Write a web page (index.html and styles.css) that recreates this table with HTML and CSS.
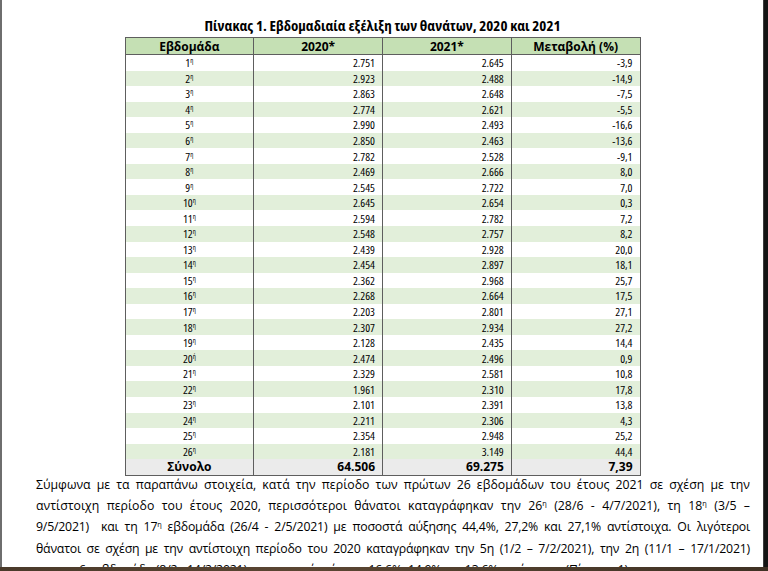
FILE: index.html
```html
<!DOCTYPE html>
<html lang="el">
<head>
<meta charset="utf-8">
<title>Πίνακας 1</title>
<link rel="stylesheet" href="styles.css">
</head>
<body>
<div class="screen">
  <div class="main">
    <div class="page">
      <h1 class="title">Πίνακας 1. Εβδομαδιαία εξέλιξη των θανάτων, 2020 και 2021</h1>
      <table class="deaths">
        <thead>
          <tr><th>Εβδομάδα</th><th>2020*</th><th>2021*</th><th>Μεταβολή (%)</th></tr>
        </thead>
        <tbody>
          <tr><td>1<sup>η</sup></td><td>2.751</td><td>2.645</td><td>-3,9</td></tr>
          <tr class="alt"><td>2<sup>η</sup></td><td>2.923</td><td>2.488</td><td>-14,9</td></tr>
          <tr><td>3<sup>η</sup></td><td>2.863</td><td>2.648</td><td>-7,5</td></tr>
          <tr class="alt"><td>4<sup>η</sup></td><td>2.774</td><td>2.621</td><td>-5,5</td></tr>
          <tr><td>5<sup>η</sup></td><td>2.990</td><td>2.493</td><td>-16,6</td></tr>
          <tr class="alt"><td>6<sup>η</sup></td><td>2.850</td><td>2.463</td><td>-13,6</td></tr>
          <tr><td>7<sup>η</sup></td><td>2.782</td><td>2.528</td><td>-9,1</td></tr>
          <tr class="alt"><td>8<sup>η</sup></td><td>2.469</td><td>2.666</td><td>8,0</td></tr>
          <tr><td>9<sup>η</sup></td><td>2.545</td><td>2.722</td><td>7,0</td></tr>
          <tr class="alt"><td>10<sup>η</sup></td><td>2.645</td><td>2.654</td><td>0,3</td></tr>
          <tr><td>11<sup>η</sup></td><td>2.594</td><td>2.782</td><td>7,2</td></tr>
          <tr class="alt"><td>12<sup>η</sup></td><td>2.548</td><td>2.757</td><td>8,2</td></tr>
          <tr><td>13<sup>η</sup></td><td>2.439</td><td>2.928</td><td>20,0</td></tr>
          <tr class="alt"><td>14<sup>η</sup></td><td>2.454</td><td>2.897</td><td>18,1</td></tr>
          <tr><td>15<sup>η</sup></td><td>2.362</td><td>2.968</td><td>25,7</td></tr>
          <tr class="alt"><td>16<sup>η</sup></td><td>2.268</td><td>2.664</td><td>17,5</td></tr>
          <tr><td>17<sup>η</sup></td><td>2.203</td><td>2.801</td><td>27,1</td></tr>
          <tr class="alt"><td>18<sup>η</sup></td><td>2.307</td><td>2.934</td><td>27,2</td></tr>
          <tr><td>19<sup>η</sup></td><td>2.128</td><td>2.435</td><td>14,4</td></tr>
          <tr class="alt"><td>20<sup>ή</sup></td><td>2.474</td><td>2.496</td><td>0,9</td></tr>
          <tr><td>21<sup>η</sup></td><td>2.329</td><td>2.581</td><td>10,8</td></tr>
          <tr class="alt"><td>22<sup>η</sup></td><td>1.961</td><td>2.310</td><td>17,8</td></tr>
          <tr><td>23<sup>η</sup></td><td>2.101</td><td>2.391</td><td>13,8</td></tr>
          <tr class="alt"><td>24<sup>η</sup></td><td>2.211</td><td>2.306</td><td>4,3</td></tr>
          <tr><td>25<sup>η</sup></td><td>2.354</td><td>2.948</td><td>25,2</td></tr>
          <tr class="alt"><td>26<sup>η</sup></td><td>2.181</td><td>3.149</td><td>44,4</td></tr>
        </tbody>
        <tfoot>
          <tr class="total"><td>Σύνολο</td><td>64.506</td><td>69.275</td><td>7,39</td></tr>
        </tfoot>
      </table>
      <div class="text">
        <p class="line">Σύμφωνα με τα παραπάνω στοιχεία, κατά την περίοδο των πρώτων 26 εβδομάδων του έτους 2021 σε σχέση με την</p>
        <p class="line">αντίστοιχη περίοδο του έτους 2020, περισσότεροι θάνατοι καταγράφηκαν την 26<sup>η</sup> (28/6 - 4/7/2021), τη 18<sup>η</sup> (3/5 –</p>
        <p class="line tight">9/5/2021)&nbsp; και τη 17<sup>η</sup> εβδομάδα (26/4 - 2/5/2021) με ποσοστά αύξησης 44,4%, 27,2% και 27,1% αντίστοιχα. Οι λιγότεροι</p>
        <p class="line tight">θάνατοι σε σχέση με την αντίστοιχη περίοδο του 2020 καταγράφηκαν την 5η (1/2 – 7/2/2021), την 2η (11/1 – 17/1/2021)</p>
        <p class="line tight last">και την 6η εβδομάδα (8/2 - 14/2/2021) με ποσοστά μείωσης 16,6%, 14,9% και 13,6% αντίστοιχα (Πίνακας 1).</p>
      </div>
    </div>
    <div class="edge"></div>
  </div>
  <div class="floor"></div>
</div>
</body>
</html>
```

FILE: styles.css
```css
html, body {
  margin: 0;
  padding: 0;
  background: #1a1a1a;
}

.screen {
  width: 768px;
  height: 571px;
  display: flex;
  flex-direction: column;
  overflow: hidden;
}

.main {
  display: flex;
  height: 567px;
}

.page {
  flex: 1;
  background: #ffffff;
  border-left: 2px solid #6e6e6e;
  overflow: hidden;
  padding-top: 15px;
  font-family: "Open Sans", "Noto Sans", sans-serif;
  font-stretch: 87.5%;
  color: #000;
}

.edge {
  width: 5px;
  background: linear-gradient(90deg, #3c3c3c 0, #3c3c3c 1px, #141414 1px);
}

.floor {
  height: 4px;
  background: linear-gradient(90deg, #4a3a2a, #5b4633 40%, #4e3d2c 70%, #3f3124);
}

.title {
  margin: 0;
  font-size: 15px;
  font-weight: 700;
  line-height: 20px;
  text-align: center;
}

.deaths {
  margin: 2px auto 0;
  width: 516px;
  border-collapse: collapse;
  table-layout: fixed;
  font-size: 11.5px;
  border: 1px solid #5e5e5e;
}

.deaths th {
  background: #c5e0b4;
  height: 16px;
  padding: 0;
  font-size: 12px;
  font-stretch: 100%;
  font-weight: 700;
  text-align: center;
  border: 1px solid #5e5e5e;
  line-height: 15px;
}

.deaths td {
  height: 15.55px;
  padding: 0 7px 0 0;
  line-height: 15px;
  text-align: right;
  border-left: 1px solid #5e5e5e;
  border-right: 1px solid #5e5e5e;
}

.deaths td:first-child {
  text-align: center;
  padding: 0;
}

.deaths sup {
  font-size: 0.6em;
  line-height: 0;
  vertical-align: 0.55em;
}

.deaths .alt td {
  background: #e2efda;
}

.deaths .total td {
  background: #ebebeb;
  font-size: 12px;
  font-stretch: 100%;
  font-weight: 700;
}

.text {
  margin: -2px 0 0;
  padding: 0 13px 0 34px;
  font-size: 12.3px;
  font-stretch: 100%;
  line-height: 21.3px;
}

.line {
  margin: 0;
  text-align: justify;
  text-align-last: justify;
}

.line.tight {
  letter-spacing: -0.2px;
}

.line.last {
  text-align-last: left;
}

.line sup {
  font-size: 0.6em;
  line-height: 0;
  vertical-align: 0.6em;
}
```
